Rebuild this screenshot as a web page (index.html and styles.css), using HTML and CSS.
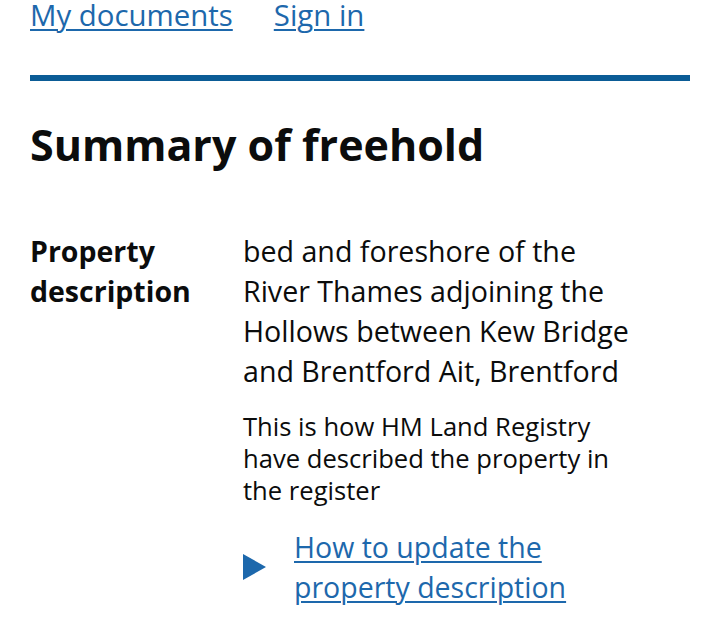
FILE: index.html
```html
<!DOCTYPE html>
<html lang="en">
<head>
  <meta charset="UTF-8" />
  <meta name="viewport" content="width=device-width, initial-scale=1.0" />
  <title>Summary of freehold</title>
  <link rel="stylesheet" href="styles.css">
</head>
<body>
  <div class="wrapper">
    <!-- Account links -->
    <header class="site-header">
      <nav class="site-nav">
        <a href="#documents">My documents</a>
        <a href="#sign-in">Sign in</a>
      </nav>
    </header>

    <main>
      <h1 class="page-title">Summary of freehold</h1>

      <dl class="summary-list">
        <div class="summary-row">
          <dt class="summary-key">Property description</dt>
          <dd class="summary-value">
            <p class="value-text">bed and foreshore of the River Thames adjoining the Hollows between Kew Bridge and Brentford Ait, Brentford</p>
            <p class="hint">This is how HM Land Registry have described the property in the register</p>

            <!-- Expandable help -->
            <details class="help">
              <summary class="help-summary">
                <span class="help-arrow"></span>
                <span class="help-link">How to update the property description</span>
              </summary>
            </details>
          </dd>
        </div>
      </dl>
    </main>
  </div>
</body>
</html>
```

FILE: styles.css
```css
body {
  margin: 0;
  padding: 0;
  background-color: #fff;
  color: #0b0c0c;
  font-family: "Open Sans", "Noto Sans", sans-serif;
}

.wrapper {
  padding: 0 30px;
}

a {
  color: #1d68ac;
  text-decoration: underline;
  text-decoration-thickness: 2px;
  text-underline-offset: 3px;
}

/* Header */
.site-header {
  padding-bottom: 45px;
  border-bottom: 6px solid #0b5c96;
}

.site-nav {
  display: flex;
  gap: 41px;
  font-size: 29.4px;
  line-height: 30px;
}

/* Heading */
.page-title {
  margin: 38px 0 0;
  font-size: 43px;
  line-height: 52px;
  font-weight: 700;
}

/* Summary list */
.summary-list {
  margin: 60px 0 0;
}

.summary-row {
  display: grid;
  grid-template-columns: 213px 400px;
}

.summary-key {
  margin: 0;
  font-size: 28.5px;
  line-height: 40px;
  font-weight: 700;
}

.summary-value {
  margin: 0;
}

.value-text {
  margin: 0;
  font-size: 28.6px;
  line-height: 40px;
}

.hint {
  margin: 20px 0 0;
  font-size: 25.6px;
  line-height: 32px;
}

/* Details */
.help {
  margin-top: 20px;
}

.help-summary {
  display: flex;
  align-items: center;
  gap: 28px;
  list-style: none;
  cursor: pointer;
  color: #1d68ac;
}

.help-summary::-webkit-details-marker {
  display: none;
}

.help-arrow {
  flex: none;
  width: 0;
  height: 0;
  border-left: 23px solid #1d68ac;
  border-top: 13px solid transparent;
  border-bottom: 13px solid transparent;
}

.help-link {
  font-size: 28.5px;
  line-height: 40px;
  text-decoration: underline;
  text-decoration-thickness: 2px;
  text-underline-offset: 3px;
}
```
